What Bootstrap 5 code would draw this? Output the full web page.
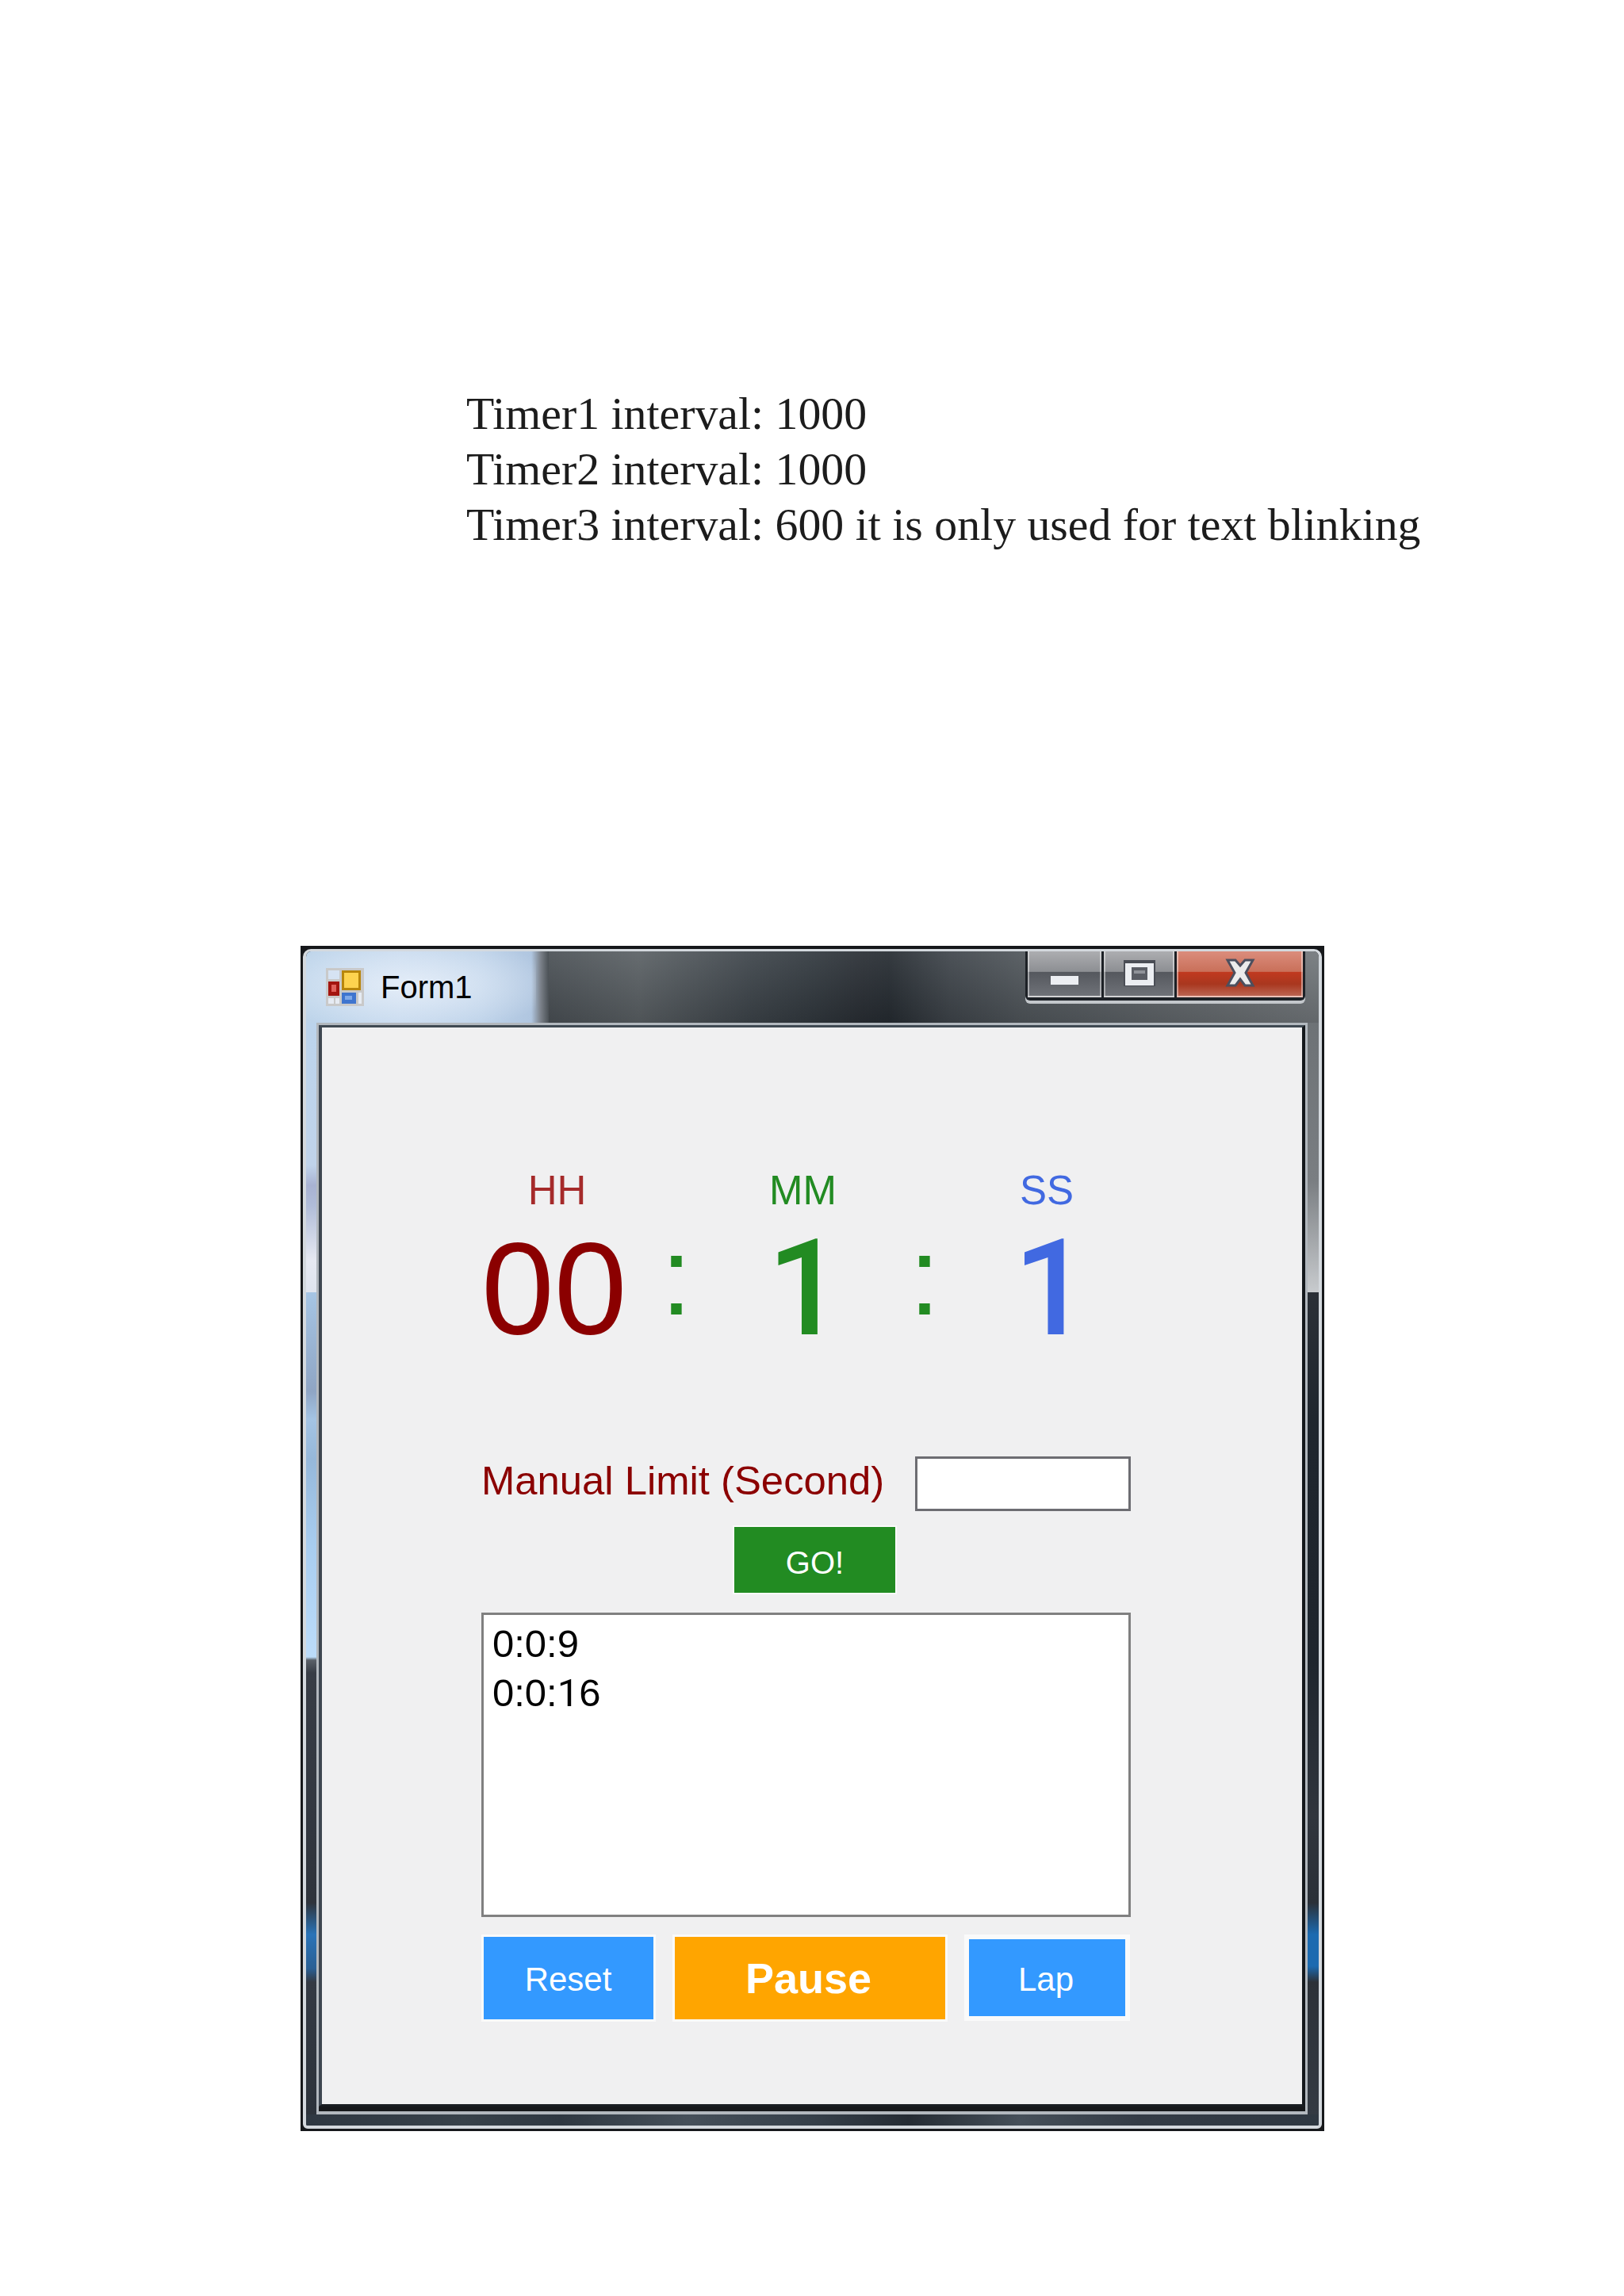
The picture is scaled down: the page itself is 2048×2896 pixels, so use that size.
<!DOCTYPE html>
<html lang="en">
<head>
<meta charset="utf-8">
<title>Form1</title>
<link href="https://cdn.jsdelivr.net/npm/bootstrap@5.3.0/dist/css/bootstrap.min.css" rel="stylesheet">
<style>
html,body{background:#fff;margin:0}
body{min-height:2896px;font-family:"Liberation Sans",Arial,sans-serif;color:#000}
.notes{margin:487px 0 0 588px;font-family:"Liberation Serif","Times New Roman",serif;font-size:57.8px;line-height:70px;color:#1c1c1c;white-space:nowrap}
.win{margin:496px 0 0 379px;width:1291px;height:1495px;background:#16181b;padding:4px 3px 3px}
.win-edge{height:100%;border:solid #d4d9de;border-width:3px 4px 4px;border-radius:10px 10px 6px 6px;overflow:hidden;display:grid;grid-template-columns:13px 1fr 14px;grid-template-rows:90px 1377px 14px}
.titlebar{grid-column:1/4;padding-left:25px;background:linear-gradient(180deg,rgba(255,255,255,.07),rgba(0,0,0,.14)) right top/971px 100% no-repeat,radial-gradient(ellipse 190px 60px at 130px 42px,#e4edf8,rgba(228,237,248,0)) left top/290px 100% no-repeat,linear-gradient(90deg,#bdd4ea 0,#c6d9ee 120px,#bdd2e9 220px,#b0c6e0 284px,#7a8088 296px,#4b5156 306px,#5b6165 420px,#3e454b 560px,#32393f 640px,#2a2f35 700px,#262c32 735px,#3f454b 810px,#50565b 900px,#6a6f73 1170px,#73787c 1276px)}
.wicon{width:48px;height:48px;flex:none}
.wname{margin-left:21px;font-size:40px;line-height:48px;color:#000}
.wctrl{margin:-3px 17px 0 auto;border:solid #1d2126;border-width:0 3px 4px;border-radius:0 0 6px 6px;gap:3px;background:#1d2126;box-shadow:0 4px 0 #c3c7cb;height:65px}
.wbtn{height:61px;border:2px solid rgba(255,255,255,.45);border-top-width:0;padding:0;display:flex;align-items:flex-start;justify-content:center;background:linear-gradient(180deg,#b0b1b4 0,#8d8f93 48%,#55585e 50%,#6f7278 100%)}
.wmin{width:93px}.wmax{width:89px}
.wclose{width:159px;background:linear-gradient(180deg,#dd9080 0,#c9705a 48%,#c0391f 50%,#a9371f 75%,#bb6451 100%)}
.fr-left{background:linear-gradient(180deg,#bcd4ec 0,#c0d3ea 180px,#a8b2d2 205px,#b0bcd8 230px,#e6e9f2 300px,#dfe4ee 340px,#a6c5e4 340px,#8fa5c4 465px,#a4c4e4 500px,#96b8da 550px,#a8cdf0 660px,#bcdcfa 800px,#5a6068 804px,#383d46 820px,#2f343c 1110px,#2a74b8 1150px,#2a5f94 1193px,#343a44 1210px,#2d333b 1377px)}
.fr-right{background:linear-gradient(180deg,#6d7276 0,#7a7e82 200px,#c8cbce 340px,#2b3037 340px,#1f262e 500px,#1e252d 800px,#30353d 1000px,#2a3038 1110px,#1c6ab0 1150px,#1c6ab0 1190px,#2c3138 1210px,#343a43 1377px)}
.fr-bottom{grid-column:1/4;background:linear-gradient(90deg,#2f3842 0,#38424a 200px,#2f3842 320px,#46505a 480px,#36404a 640px,#252c34 760px,#46505a 900px,#343c46 1050px,#2f3842 1276px)}
.client-wrap{border:solid #b2b8be;border-width:3px 3px 4px;min-width:0}
.client{height:1364px;border:solid;border-width:3px 4px;border-color:#3f4952 #14181c #1a1e23 #3d4650;background:#f0f0f1;padding:180px 0 0 201px}
.clabels{height:52px;font-size:51px;line-height:52px}
.cell-a{width:191px}.cell-b{width:429px}.cell-c{width:186px}
.clock{margin-top:22px;height:150px;font-size:165px;line-height:150px}
.cx0{width:187px;color:#8b0000}
.cxc1{width:118px}.cx1{width:207px}.cxc2{width:94px}.cx2{width:226px}
.cx0,.cxc1,.cx1,.cxc2,.cx2{flex:none}
.cx1,.cx2{font-family:Roboto,"Liberation Sans",sans-serif;font-size:169px;font-weight:500}
.sep{font-size:140px;line-height:120px;color:#228b22;align-self:flex-start}
.tone-r{color:#a52a2a}.tone-g{color:#228b22}.tone-b{color:#4169e1}
.limit{margin-top:137px;width:819px}
.limit-t{font-size:50.8px;line-height:61px;color:#8b0000;white-space:nowrap}
.limit-i.form-control{width:272px;height:69px;flex:none;border:3px solid #6d6d72;border-radius:0;background:#fff}
.flatbtn.btn{border-radius:0;padding:0;color:#fff;display:flex;align-items:center;justify-content:center}
.gobtn.btn{margin:20px 0 0 319px;width:203px;height:83px;background:#228b22;border:0;font-size:40px;padding-top:6px;box-shadow:0 0 0 2px #fafafa}
.logbox{margin-top:25px;width:819px;height:384px;border:3px solid #808080;background:#fff;padding:5px 0 0 11px}
.logbox .list-group-item{border:0;padding:0;background:transparent;font-size:49px;line-height:62px;color:#000}
.nofoot{font-family:Roboto,"Liberation Sans",sans-serif}
.acts{margin-top:22px;gap:21px}
.act-a.btn{width:220px;height:110px;background:#39f;border:3px solid #fafafa;font-size:42px;padding:3px 1px 0 0}
.act-b.btn{width:347px;height:110px;background:#ffa500;border:3px solid #fafafa;font-size:54px;padding-right:4px}
.act-c.btn{width:209px;height:109px;background:#39f;border:6px solid #fafafa;font-size:42px;padding:3px 3px 0 0}
</style>
</head>
<body>
<div class="notes">
  <div>Timer1 interval: 1000</div>
  <div>Timer2 interval: 1000</div>
  <div>Timer3 interval: 600 it is only used for text blinking</div>
</div>

<div class="win">
  <div class="win-edge">
    <div class="titlebar d-flex align-items-center">
      <svg class="wicon" viewBox="0 0 48 48" aria-hidden="true">
        <rect width="48" height="48" fill="#c9c9c9"/>
        <rect x="3" y="3" width="14" height="11" fill="#d6e3f3"/>
        <rect x="20" y="3" width="24" height="25" fill="#b8860b"/>
        <rect x="23" y="6" width="18" height="19" fill="#fdd34f"/>
        <rect x="3" y="17" width="14" height="18" fill="#a3140f"/>
        <rect x="7" y="21" width="6" height="9" fill="#e0605a"/>
        <rect x="20" y="31" width="18" height="14" fill="#3f75cf"/>
        <rect x="24" y="35" width="9" height="5" fill="#7fa9e8"/>
        <rect x="3" y="38" width="7" height="7" fill="#e6ebf3"/>
        <rect x="12" y="38" width="5" height="7" fill="#e6ebf3"/>
        <rect x="41" y="31" width="4" height="14" fill="#e6ebf3"/>
      </svg>
      <span class="wname">Form1</span>
      <div class="wctrl d-flex align-self-start">
        <div class="wbtn wmin"><svg width="35" height="45" viewBox="0 0 35 45" aria-hidden="true"><rect x="0" y="34" width="35" height="11" fill="#eceef2"/></svg></div>
        <div class="wbtn wmax"><svg width="40" height="47" viewBox="0 0 40 47" aria-hidden="true"><rect x="0" y="14" width="40" height="33" fill="#4a4d55"/><rect x="2" y="18" width="36" height="28" fill="#eceef2"/><rect x="10" y="23" width="20" height="16" fill="#5a5d65"/><rect x="13" y="27" width="14" height="4" fill="#8f9299"/></svg></div>
        <div class="wbtn wclose"><svg width="38" height="48" viewBox="0 0 38 48" aria-hidden="true"><path d="M3 14h10l6 7 6-7h10l-9 16 9 16H25l-6-8-6 8H3l9-16z" fill="#ececec" stroke="#4c4f5e" stroke-width="3"/></svg></div>
      </div>
    </div>
    <div class="fr-left"></div>
    <div class="client-wrap">
      <div class="client">
        <div class="clabels d-flex text-center">
          <div class="cell-a tone-r">HH</div>
          <div class="cell-b tone-g">MM</div>
          <div class="cell-c tone-b">SS</div>
        </div>
        <div class="clock d-flex text-center">
          <div class="cx0 text-start">00</div>
          <div class="cxc1 sep">:</div>
          <div class="cx1 tone-g">1</div>
          <div class="cxc2 sep">:</div>
          <div class="cx2 tone-b">1</div>
        </div>
        <div class="limit d-flex justify-content-between align-items-start">
          <label class="limit-t" for="lim">Manual Limit (Second)</label>
          <input id="lim" class="limit-i form-control" type="text">
        </div>
        <button type="button" class="btn flatbtn gobtn">GO!</button>
        <div class="logbox">
          <ul class="list-group list-group-flush">
            <li class="list-group-item">0:0:9</li>
            <li class="list-group-item">0:0:<span class="nofoot">1</span>6</li>
          </ul>
        </div>
        <div class="acts d-flex">
          <button type="button" class="btn flatbtn act-a">Reset</button>
          <button type="button" class="btn flatbtn act-b fw-bold">Pause</button>
          <button type="button" class="btn flatbtn act-c">Lap</button>
        </div>
      </div>
    </div>
    <div class="fr-right"></div>
    <div class="fr-bottom"></div>
  </div>
</div>
<script src="https://cdn.jsdelivr.net/npm/bootstrap@5.3.0/dist/js/bootstrap.bundle.min.js"></script>
</body>
</html>
